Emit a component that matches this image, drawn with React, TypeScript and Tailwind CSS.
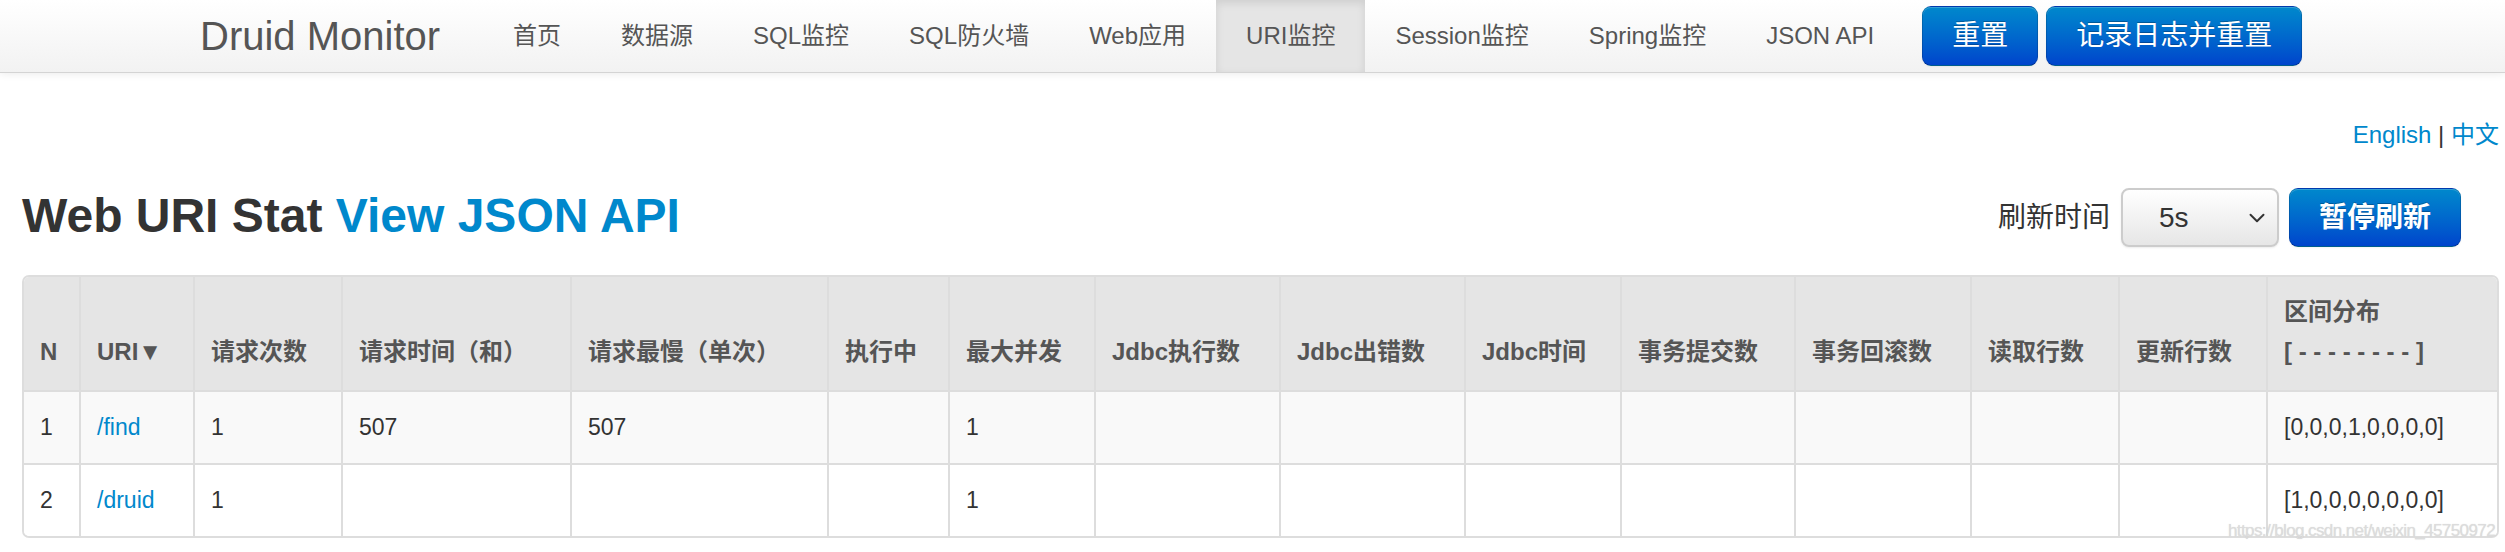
import React from 'react';
import { ChevronDown } from 'lucide-react';

const FONT = '[font-family:"Liberation_Sans","Noto_Sans_CJK_SC",Arial,sans-serif]';

const navItems = ['首页', '数据源', 'SQL监控', 'SQL防火墙', 'Web应用', 'URI监控', 'Session监控', 'Spring监控', 'JSON API'];

const columns: { label: React.ReactNode; w: string }[] = [
  { label: 'N', w: 'w-[55px]' },
  { label: 'URI▼', w: 'w-[114px]' },
  { label: '请求次数', w: 'w-[148px]' },
  { label: '请求时间（和）', w: 'w-[229px]' },
  { label: '请求最慢（单次）', w: 'w-[257px]' },
  { label: '执行中', w: 'w-[121px]' },
  { label: '最大并发', w: 'w-[146px]' },
  { label: 'Jdbc执行数', w: 'w-[185px]' },
  { label: 'Jdbc出错数', w: 'w-[185px]' },
  { label: 'Jdbc时间', w: 'w-[156px]' },
  { label: '事务提交数', w: 'w-[174px]' },
  { label: '事务回滚数', w: 'w-[176px]' },
  { label: '读取行数', w: 'w-[148px]' },
  { label: '更新行数', w: 'w-[148px]' },
  {
    label: (
      <>
        区间分布
        <br />[ - - - - - - - - ]
      </>
    ),
    w: 'w-[231px]',
  },
];

const rows = [
  ['1', '/find', '1', '507', '507', '', '1', '', '', '', '', '', '', '', '[0,0,0,1,0,0,0,0]'],
  ['2', '/druid', '1', '', '', '', '1', '', '', '', '', '', '', '', '[1,0,0,0,0,0,0,0]'],
];

const btn =
  'bg-linear-to-b from-[#0088cc] to-[#0044cc] text-white border border-[rgba(0,0,0,0.15)] border-b-[rgba(0,0,0,0.3)] rounded-[9px] [text-shadow:0_-1px_0_rgba(0,0,0,0.25)] shadow-[inset_0_1px_0_rgba(255,255,255,0.2),0_1px_2px_rgba(0,0,0,0.05)]';

export default function App() {
  return (
    <div className={`${FONT} relative w-[2505px] h-[552px] overflow-hidden bg-white text-[#333]`}>
      {/* Navbar */}
      <div className="h-[73px] bg-linear-to-b from-white to-[#f2f2f2] border-b border-[#d4d4d4] shadow-[0_1px_8px_rgba(0,0,0,0.08)] flex items-center pl-[200px]">
        <span className="text-[40px] text-[#555] mr-[43px] leading-none">Druid Monitor</span>
        <ul className="flex h-full">
          {navItems.map((item) => (
            <li key={item} className="h-full">
              <a
                className={`h-full flex items-center px-[30px] text-[24px] text-[#555] ${
                  item === 'URI监控' ? 'bg-[#e5e5e5] shadow-[inset_0_3px_8px_rgba(0,0,0,0.1)]' : ''
                }`}
              >
                {item}
              </a>
            </li>
          ))}
        </ul>
        <div className="flex gap-[8px] ml-[18px]">
          <button className={`${btn} h-[60px] px-[29px] text-[28px]`}>重置</button>
          <button className={`${btn} h-[60px] px-[29px] text-[28px]`}>记录日志并重置</button>
        </div>
      </div>

      {/* Content */}
      <div className="pl-[22px] pr-[6px]">
        <div className="mt-[45px] h-[34px] leading-[34px] text-[24px] text-right">
          <a className="text-[#0088cc]">English</a> | <a className="text-[#0088cc]">中文</a>
        </div>

        <div className="mt-[36px] h-[59px] flex items-center justify-between">
          <h2 className="text-[48px] font-bold leading-[59px] mb-[4px]">
            Web URI Stat <a className="text-[#0088cc]">View JSON API</a>
          </h2>
          <div className="flex items-center mr-[38px]">
            <span className="text-[28px] mr-[11px]">刷新时间</span>
            <div className="w-[158px] h-[59px] flex items-center justify-between pl-[36px] pr-[7px] bg-linear-to-b from-white to-[#e6e6e6] border-2 border-[#cccccc] rounded-[8px] shadow-[0_1px_2px_rgba(0,0,0,0.08)]">
              <span className="text-[28px] text-[#333]">5s</span>
              <ChevronDown size={26} strokeWidth={1.8} className="text-[#333]" />
            </div>
            <button className={`${btn} ml-[10px] w-[172px] h-[59px] text-[28px] font-bold`}>暂停刷新</button>
          </div>
        </div>

        <div className="mt-[28px] border-2 border-[#dddddd] rounded-[7px] overflow-hidden">
          <table className="table-fixed w-[2473px] border-separate border-spacing-0">
            <thead>
              <tr>
                {columns.map((c, i) => (
                  <th
                    key={i}
                    className={`${c.w} h-[113px] bg-[#e5e5e5] align-bottom text-left font-bold text-[24px] leading-[40px] text-[#555] pl-[16px] pr-[4px] pb-[18px] whitespace-nowrap ${
                      i > 0 ? 'border-l-2 border-[#dddddd]' : ''
                    }`}
                  >
                    {c.label}
                  </th>
                ))}
              </tr>
            </thead>
            <tbody>
              {rows.map((r, ri) => (
                <tr key={ri} className={ri === 0 ? 'bg-[#f9f9f9]' : 'bg-white'}>
                  {r.map((cell, ci) => (
                    <td
                      key={ci}
                      className={`h-[73px] align-middle text-[23px] pl-[16px] border-t-2 border-[#dddddd] whitespace-nowrap ${
                        ci > 0 ? 'border-l-2' : ''
                      }`}
                    >
                      {ci === 1 ? <a className="text-[#0088cc]">{cell}</a> : cell}
                    </td>
                  ))}
                </tr>
              ))}
            </tbody>
          </table>
        </div>
      </div>

      {/* watermark */}
      <div className="absolute right-[10px] top-[520px] text-[17px] leading-[22px] text-[#dcdcdc] [text-shadow:0_0_1px_rgba(150,150,150,0.35)] tracking-[-0.6px] whitespace-nowrap">
        https://blog.csdn.net/weixin_45750972
      </div>
    </div>
  );
}
